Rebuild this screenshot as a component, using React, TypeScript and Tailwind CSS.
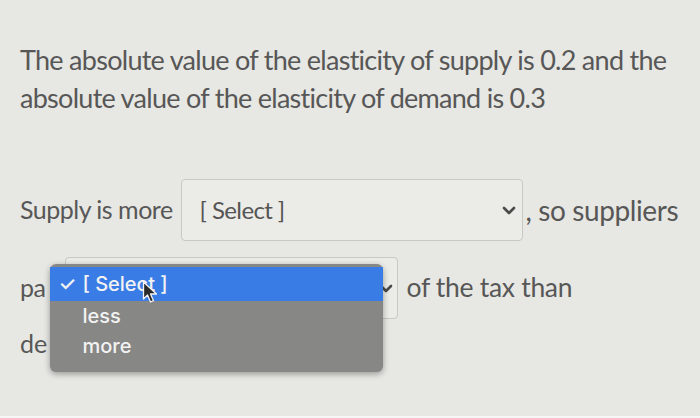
import React from "react";

const textFont = { fontFamily: "Lato, 'Open Sans', sans-serif" };

const Chevron = ({ className }: { className?: string }) => (
  <svg viewBox="0 0 14 9" className={className} fill="none">
    <path d="M2 2l5 5 5-5" stroke="#4a4a4a" strokeWidth="2.6" strokeLinecap="round" strokeLinejoin="round" />
  </svg>
);

const Cursor = () => (
  <svg viewBox="0 0 14 22" className="absolute left-[92px] top-[14px] w-[15px] h-[22px]">
    <path d="M1 1v17l4-4 3 7 3-1.3-3-6.7h6z" fill="#2b2b2b" stroke="#f4f4f4" strokeWidth="1.3" strokeLinejoin="round" />
  </svg>
);

export default function App() {
  return (
    <div className="w-[700px] h-[418px] overflow-hidden bg-[#e7e7e3] text-[#575757] relative" style={textFont}>
      <div className="pl-5 pt-[41px]">
        <p className="text-[27px] leading-[38px] tracking-[-0.72px] w-[675px]">
          The absolute value of the elasticity of supply is 0.2 and the absolute value of the elasticity of demand is 0.3
        </p>

        <div className="mt-[62px] flex items-center h-[62px] text-[25px] tracking-[-0.5px]">
          <span>Supply is more</span>
          <div className="ml-2 w-[342px] h-[62px] border border-[#c9c9c4] rounded-[4px] bg-[#ebebe7] flex items-center justify-between pl-[18px] pr-[6px]">
            <span className="text-[24px] tracking-[-0.6px] text-[#555]">[ Select ]</span>
            <Chevron className="w-[14px] h-[9px]" />
          </div>
          <span className="ml-[3px] text-[28px] tracking-[-0.4px]">, so suppliers</span>
        </div>

        <div className="mt-[16px] flex items-center h-[62px] text-[25px] tracking-[-0.5px]">
          <span>pa</span>
          <div className="relative ml-[20px] w-[333px] h-[62px] border border-[#c9c9c4] rounded-[4px] bg-[#ebebe7] flex items-center justify-end pr-[4px]">
            <Chevron className="w-[14px] h-[9px]" />
            <div
              className="absolute left-[-16px] top-[6px] w-[333px] h-[108px] rounded-[6px] bg-[#878786] shadow-[0_2px_6px_rgba(0,0,0,0.35)] pt-[3px] text-[20px] font-medium text-[#f2f2f2] tracking-normal"
              style={{ fontFamily: "Inter, 'Liberation Sans', sans-serif" }}
            >
              <div className="relative h-[34px] bg-[#3a7ce6] flex items-center">
                <span className="w-[32px] pl-[8px] text-[20px]">✓</span>
                <span>[ Select ]</span>
                <Cursor />
              </div>
              <div className="h-[30px] flex items-center pl-[32px]">less</div>
              <div className="h-[30px] flex items-center pl-[32px]">more</div>
            </div>
          </div>
          <span className="ml-[8px] text-[26.5px] tracking-[-0.3px]">of the tax than</span>
        </div>

        <div className="mt-[5px] h-[40px] flex items-center text-[25px]">
          <span>de</span>
        </div>
      </div>
      <div className="absolute left-0 right-0 bottom-0 h-[2px] bg-[#f6f6f4]" />
    </div>
  );
}
